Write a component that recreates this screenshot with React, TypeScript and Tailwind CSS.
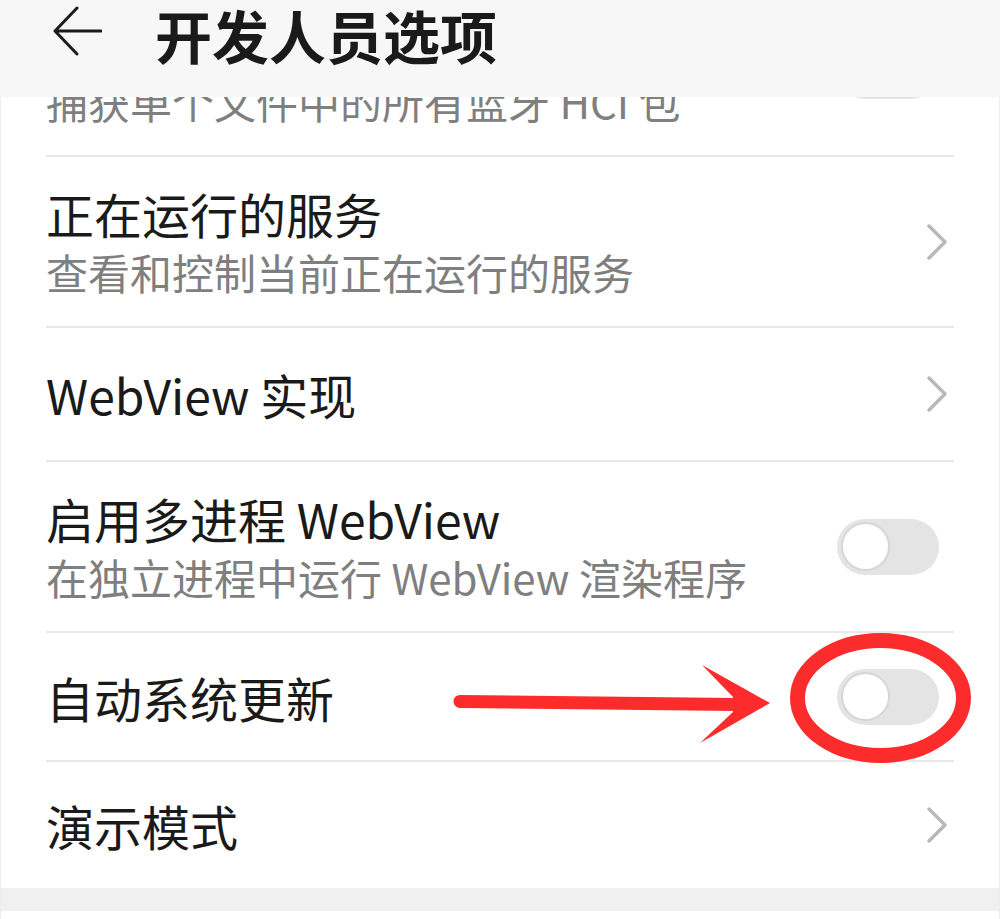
const cjk = "font-['Noto_Sans_CJK_SC',sans-serif]";

function Chevron() {
  return (
    <svg width="22" height="38" viewBox="0 0 22 38" className="mr-[6px] shrink-0">
      <polyline points="3,3 19,19 3,35" fill="none" stroke="#b8b8b8" strokeWidth="3.5" strokeLinecap="round" strokeLinejoin="round" />
    </svg>
  );
}

function Toggle() {
  return (
    <div className="mr-[15px] flex h-[56px] w-[102px] shrink-0 items-center rounded-full bg-[#e4e4e4] px-[4px]">
      <div className="h-[49px] w-[49px] rounded-full border-2 border-[#d6d6d6] bg-white" />
    </div>
  );
}

type Row = {
  title: string;
  sub?: string;
  right: "chevron" | "toggle";
  h: string;
  last?: boolean;
};

const rows: Row[] = [
  { title: "启用蓝牙 HCI 信息收集日志", sub: "捕获单个文件中的所有蓝牙 HCI 包", right: "toggle", h: "h-[171px]" },
  { title: "正在运行的服务", sub: "查看和控制当前正在运行的服务", right: "chevron", h: "h-[171px]" },
  { title: "WebView 实现", right: "chevron", h: "h-[134px]" },
  { title: "启用多进程 WebView", sub: "在独立进程中运行 WebView 渲染程序", right: "toggle", h: "h-[171px]" },
  { title: "自动系统更新", right: "toggle", h: "h-[129px]" },
  { title: "演示模式", right: "chevron", h: "h-[126px]", last: true },
];

export default function App() {
  return (
    <div className={`relative h-[919px] w-[1000px] overflow-hidden bg-white ${cjk}`}>
      {/* 标题栏 */}
      <header className="flex h-[97px] items-start bg-[#f7f7f7] pl-[52px] pt-[6px]">
        <svg width="50" height="50" viewBox="0 0 50 50" className="shrink-0">
          <path d="M49 25 H3 M25 2 L3 25 L25 48" fill="none" stroke="#1c1c1c" strokeWidth="3" strokeLinecap="round" strokeLinejoin="round" />
        </svg>
        <h1 className="ml-[53px] text-[57px] leading-[57px] font-bold text-[#1a1a1a]">开发人员选项</h1>
      </header>

      {/* 列表 */}
      <div className="h-[822px] overflow-hidden border-x border-[#eeeeee]">
        <div className="-mt-[111px]">
          {rows.map((r) => (
            <div key={r.title} className="px-[45px]">
              <div
                className={`flex items-center justify-between ${r.h} ${r.last ? "" : "border-b-2 border-[#e8e8e8]"}`}
              >
                <div className="flex flex-col">
                  <div className="text-[48px] leading-[60px] text-[#1a1a1a]">{r.title}</div>
                  {r.sub && <div className="text-[42px] leading-[58px] text-[#7f7f7f]">{r.sub}</div>}
                </div>
                {r.right === "chevron" ? <Chevron /> : <Toggle />}
              </div>
            </div>
          ))}
          <div className="h-[23px] bg-[#f0f0f0]" />
          <div className="h-[40px] bg-white" />
        </div>
      </div>

      {/* 红色标注 */}
      <svg className="pointer-events-none absolute inset-0" width="1000" height="919" viewBox="0 0 1000 919">
        <ellipse cx="880.5" cy="698" rx="83" ry="57.5" fill="none" stroke="#fd2c2c" strokeWidth="15" />
        <line x1="460" y1="701.5" x2="736" y2="704.5" stroke="#fd2c2c" strokeWidth="13" strokeLinecap="round" />
        <polygon points="702,665 770,703 700,743 733,712 733,697" fill="#fd2c2c" />
      </svg>
    </div>
  );
}
